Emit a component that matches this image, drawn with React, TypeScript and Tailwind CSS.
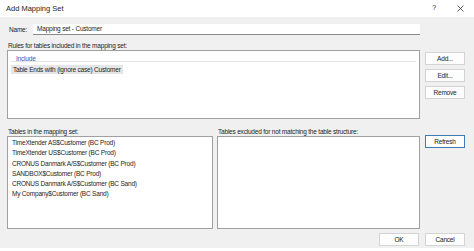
import React from 'react';

const mappedTables = [
    "TimeXtender AS$Customer (BC Prod)",
    "TimeXtender US$Customer (BC Prod)",
    "CRONUS Danmark A/S$Customer (BC Prod)",
    "SANDBOX$Customer (BC Prod)",
    "CRONUS Danmark A/S$Customer (BC Sand)",
    "My Company$Customer (BC Sand)"
];

const Button: React.FC<{ label: string; primary?: boolean }> = ({ label, primary }) => (
    <div
        className={`flex items-center justify-center w-[40px] h-[13px] bg-[#fdfdfd] border text-[6.5px] text-[#222] ${primary ? 'border-[#3d7ab8]' : 'border-[#d4d4d4]'}`}
    >
        {label}
    </div>
);

const App: React.FC = () => {
    return (
        <div
            className="w-[474px] h-[251px] flex flex-col bg-white text-[6.5px] tracking-[-0.2px] text-[#1e1e1e] overflow-hidden"
            style={{ fontFamily: '"Liberation Sans", Arial, sans-serif' }}
        >
            {/* title bar */}
            <div className="h-[17px] flex items-center pl-[6px] pr-[9px] bg-white">
                <span className="text-[7.5px] tracking-normal">Add Mapping Set</span>
                <span className="ml-auto text-[7px] mr-[21px]">?</span>
                <svg width="7" height="7" viewBox="0 0 7 7" className="mr-[1px]">
                    <path d="M0.5 0.5 L6.5 6.5 M6.5 0.5 L0.5 6.5" stroke="#333" strokeWidth="0.8" />
                </svg>
            </div>

            <div className="h-[231px] bg-[#f0f0f0] px-[7px] flex flex-col">
                {/* name */}
                <div className="mt-[7px] flex items-center h-[11px]">
                    <span className="w-[26px] pl-[2px]">Name:</span>
                    <div className="w-[387px] h-[11px] bg-white border-b border-[#8a8a8a] flex items-center pl-[4px]">
                        Mapping set - Customer
                    </div>
                </div>

                {/* rules */}
                <div className="mt-[6px] h-[9px] leading-[9px] pl-[1px]">Rules for tables included in the mapping set:</div>
                <div className="mt-[0px] flex">
                    <div className="w-[413px] h-[69px] bg-white border border-[#a0a0a0] px-[3px] pt-[4px]">
                        <div className="pl-[5px] h-[7px] leading-[7px] text-[#3a57b0] border-b border-[#e4e4e4]">Include</div>
                        <div className="mt-[3px] inline-block bg-[#e6e6e6] px-[2px] h-[9px] leading-[9px]">
                            Table Ends with (ignore case) Customer
                        </div>
                    </div>
                    <div className="ml-[5px] mt-[2px] flex flex-col gap-[4px]">
                        <Button label="Add..." />
                        <Button label="Edit..." />
                        <Button label="Remove" />
                    </div>
                </div>

                {/* tables */}
                <div className="mt-[9px] flex">
                    <div className="w-[206px] flex flex-col">
                        <div className="h-[8px] leading-[8px] pl-[1px]">Tables in the mapping set:</div>
                        <div className="h-[93px] bg-white border border-[#a0a0a0] pt-[1px] pl-[4px]">
                            {mappedTables.map((name, index) => (
                                <div key={index} className="h-[10.3px] leading-[10.3px]">{name}</div>
                            ))}
                        </div>
                    </div>
                    <div className="ml-[4px] w-[203px] flex flex-col">
                        <div className="h-[8px] leading-[8px] pl-[1px]">Tables excluded for not matching the table structure:</div>
                        <div className="h-[93px] bg-white border border-[#a0a0a0]"></div>
                    </div>
                    <div className="ml-[5px] mt-[7px]">
                        <Button label="Refresh" primary />
                    </div>
                </div>

                {/* footer */}
                <div className="mt-[4px] flex justify-end gap-[6px] pr-[2px]">
                    <Button label="OK" />
                    <Button label="Cancel" />
                </div>
            </div>
        </div>
    );
};

export default App;
